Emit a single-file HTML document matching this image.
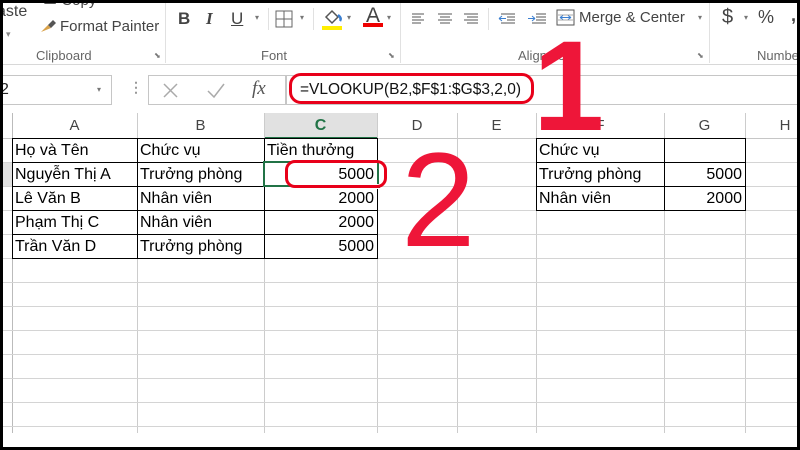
<!DOCTYPE html>
<html><head><meta charset="utf-8"><style>
*{margin:0;padding:0;box-sizing:border-box}
body{width:800px;height:450px;overflow:hidden;background:#000;font-family:"Liberation Sans",Arial,sans-serif;position:relative}
.a{position:absolute}
#page{position:absolute;left:3px;top:3px;width:794px;height:444px;background:#fff;overflow:hidden}
.rb{color:#444;font-size:15px}
.gl{color:#666;font-size:13px}
.vs{position:absolute;width:1px;background:#e1e1e1}
.hl{position:absolute;height:1px;background:#d4d4d4;left:0;width:800px}
.vl{position:absolute;width:1px;background:#d4d4d4;top:136px;height:320px}
.ch{position:absolute;top:110px;height:26px;line-height:26px;text-align:center;font-size:15px;color:#444}
.t{position:absolute;font-size:16px;color:#000;height:24px;line-height:24px;padding-left:3px;white-space:nowrap}
.n{text-align:right;padding-right:3px;padding-left:0}
</style></head><body>
<div id="page">
<div class="a rb" style="left:-6px;top:0;font-size:16px">aste</div>
<div class="a" style="left:3px;top:26px;color:#888;font-size:9px">▾</div>
<div class="a" style="left:40px;top:-12px;font-size:15px;color:#444">▭ Copy</div>
<svg class="a" style="left:36px;top:15px" width="18" height="16"><path d="M2 14 L9 7 L12 10 Z" fill="#d9a24a"/><path d="M9 7 L14 2 L17 5 L12 10Z" fill="#555"/></svg>
<div class="a rb" style="left:57px;top:15px">Format Painter</div>
<div class="a gl" style="left:33px;top:45px">Clipboard</div>
<div class="a" style="left:151px;top:48px;font-size:8px;color:#777">⬊</div>
<div class="vs" style="left:162px;top:0;height:60px"></div>
<div class="a" style="left:175px;top:6px;font-weight:bold;font-size:17px;color:#444">B</div>
<div class="a" style="left:203px;top:6px;font-style:italic;font-size:17px;color:#444;font-family:'Liberation Serif',serif;font-weight:bold">I</div>
<div class="a" style="left:228px;top:6px;font-size:17px;color:#444;text-decoration:underline">U</div>
<div class="a" style="left:252px;top:10px;font-size:8px;color:#777">▾</div>
<div class="vs" style="left:265px;top:5px;height:22px"></div>
<svg class="a" style="left:272px;top:7px" width="18" height="18"><rect x="1" y="1" width="16" height="16" fill="none" stroke="#666"/><path d="M9 1V17M1 9H17" stroke="#666"/></svg>
<div class="a" style="left:297px;top:10px;font-size:8px;color:#777">▾</div>
<div class="vs" style="left:310px;top:5px;height:22px"></div>
<svg class="a" style="left:318px;top:4px" width="24" height="24"><path d="M5 10 L11 4 L17 10 L11 16Z" fill="none" stroke="#555" stroke-width="1.5"/><path d="M17 8 q4 3 2 6" fill="none" stroke="#3b7fd1" stroke-width="2.5"/><rect x="1" y="19" width="20" height="4" fill="#ffee00"/></svg>
<div class="a" style="left:344px;top:10px;font-size:8px;color:#777">▾</div>
<div class="a" style="left:363px;top:1px;font-size:21px;color:#444">A</div>
<div class="a" style="left:360px;top:20px;width:20px;height:4px;background:#e00"></div>
<div class="a" style="left:384px;top:10px;font-size:8px;color:#777">▾</div>
<div class="a gl" style="left:258px;top:45px">Font</div>
<div class="a" style="left:385px;top:48px;font-size:8px;color:#777">⬊</div>
<div class="vs" style="left:397px;top:0;height:60px"></div>
<svg class="a" style="left:405px;top:9px" width="140" height="14" stroke="#555" stroke-width="1"><path d="M4 2H16M4 5H13M4 8H16M4 11H13"/><path d="M30 2H44M32 5H42M30 8H44M32 11H42"/><path d="M56 2H70M59 5H70M56 8H70M59 11H70"/><path d="M93 2H107M99 5H107M99 8H107M93 11H107" /><path d="M91 6.5H98M91 6.5l3-2.5M91 6.5l3 2.5" stroke="#3b7fd1"/><path d="M128 2H138M128 5H138M128 8H138M124 11H138"/><path d="M120 6.5H127M127 6.5l-3-2.5M127 6.5l-3 2.5" stroke="#3b7fd1"/></svg>
<div class="vs" style="left:485px;top:5px;height:22px"></div>
<svg class="a" style="left:553px;top:5px" width="20" height="20"><rect x="1" y="2" width="17" height="15" fill="none" stroke="#555"/><path d="M1 7H18M1 12H18" stroke="#aaa"/><path d="M4 9.5H15M4 9.5l3-2M4 9.5l3 2M15 9.5l-3-2M15 9.5l-3 2" stroke="#3b7fd1"/></svg>
<div class="a rb" style="left:576px;top:6px">Merge &amp; Center</div>
<div class="a" style="left:695px;top:10px;font-size:8px;color:#777">▾</div>
<div class="a gl" style="left:515px;top:45px">Alignment</div>
<div class="a" style="left:694px;top:48px;font-size:8px;color:#777">⬊</div>
<div class="vs" style="left:706px;top:0;height:60px"></div>
<div class="a" style="left:719px;top:3px;font-size:20px;color:#444">$</div>
<div class="a" style="left:741px;top:10px;font-size:8px;color:#777">▾</div>
<div class="a" style="left:755px;top:4px;font-size:18px;color:#444">%</div>
<div class="a" style="left:788px;top:2px;font-size:18px;color:#444;font-weight:bold">,</div>
<div class="a gl" style="left:754px;top:45px">Number</div>
<div class="a" style="left:0;top:61px;width:800px;height:1px;background:#d8d8d8"></div>
<div class="a" style="left:0;top:62px;width:800px;height:48px;background:#fff"></div>
<div class="a" style="left:-3px;top:72px;width:112px;height:30px;border:1px solid #c6c6c6;background:#fff"></div>
<div class="a" style="left:-3px;top:78px;font-size:16px;color:#222">2</div>
<div class="a" style="left:94px;top:82px;font-size:8px;color:#777">▾</div>
<div class="a" style="left:126px;top:76px;font-size:14px;color:#999;font-weight:bold">⋮</div>
<div class="a" style="left:145px;top:72px;width:138px;height:30px;border:1px solid #c6c6c6;background:#fff"></div>
<svg class="a" style="left:158px;top:79px" width="80" height="18"><path d="M3 2L16 15M16 2L3 15" stroke="#aaa" stroke-width="1.5"/><path d="M47 9L53 15L63 2" stroke="#aaa" stroke-width="1.5" fill="none"/></svg>
<div class="a" style="left:249px;top:75px;font-size:19px;color:#555;font-style:italic;font-family:'Liberation Serif',serif">fx</div>
<div class="a" style="left:283px;top:72px;width:520px;height:30px;border:1px solid #c6c6c6;background:#fff"></div>
<div class="a" style="left:286px;top:70px;width:245px;height:31px;border:3px solid #e8001a;border-radius:12px"></div>
<div class="a" style="left:297px;top:78px;font-size:15.5px;color:#111">=VLOOKUP(B2,$F$1:$G$3,2,0)</div>
<div class="a" style="left:0;top:110px;width:800px;height:26px;background:#fff"></div>
<div class="a" style="left:261px;top:110px;width:113px;height:26px;background:#e1e1e1;border-bottom:2px solid #217346"></div>
<div class="a" style="left:0;top:135px;width:800px;height:1px;background:#c6c6c6"></div>
<div class="vl" style="left:9px;top:110px;background:#bbb"></div>
<div class="vl" style="left:134px;top:110px;background:#ccc"></div>
<div class="vl" style="left:261px;top:110px;background:#ccc"></div>
<div class="vl" style="left:374px;top:110px;background:#ccc"></div>
<div class="vl" style="left:454px;top:110px;background:#ccc"></div>
<div class="vl" style="left:533px;top:110px;background:#ccc"></div>
<div class="vl" style="left:661px;top:110px;background:#ccc"></div>
<div class="vl" style="left:742px;top:110px;background:#ccc"></div>
<div class="ch" style="left:9px;width:125px">A</div>
<div class="ch" style="left:134px;width:127px">B</div>
<div class="ch" style="left:261px;width:113px;color:#217346;font-weight:bold;font-size:16px">C</div>
<div class="ch" style="left:374px;width:80px">D</div>
<div class="ch" style="left:454px;width:79px">E</div>
<div class="ch" style="left:533px;width:128px">F</div>
<div class="ch" style="left:661px;width:81px">G</div>
<div class="ch" style="left:742px;width:80px">H</div>
<div class="hl" style="top:159px"></div><div class="hl" style="top:183px"></div><div class="hl" style="top:207px"></div><div class="hl" style="top:231px"></div><div class="hl" style="top:255px"></div><div class="hl" style="top:279px"></div><div class="hl" style="top:303px"></div><div class="hl" style="top:327px"></div><div class="hl" style="top:351px"></div><div class="hl" style="top:375px"></div><div class="hl" style="top:399px"></div><div class="hl" style="top:423px"></div>
<div class="a" style="left:0;top:160px;width:9px;height:23px;background:#e1e1e1"></div>
<div class="a" style="left:9px;top:135px;width:366px;height:121px;border:1px solid #000"></div>
<div class="a" style="left:134px;top:135px;width:1px;height:121px;background:#000"></div>
<div class="a" style="left:261px;top:135px;width:1px;height:121px;background:#000"></div>
<div class="a" style="left:9px;top:159px;width:366px;height:1px;background:#000"></div>
<div class="a" style="left:9px;top:183px;width:366px;height:1px;background:#000"></div>
<div class="a" style="left:9px;top:207px;width:366px;height:1px;background:#000"></div>
<div class="a" style="left:9px;top:231px;width:366px;height:1px;background:#000"></div>
<div class="a" style="left:260px;top:158px;width:116px;height:26px;border:2px solid #217346"></div>
<div class="a" style="left:373px;top:181px;width:5px;height:5px;background:#217346;border:1px solid #fff"></div>
<div class="t" style="left:9px;top:136px">Họ và Tên</div>
<div class="t" style="left:134px;top:136px">Chức vụ</div>
<div class="t" style="left:261px;top:136px">Tiền thưởng</div>
<div class="t" style="left:9px;top:160px">Nguyễn Thị A</div>
<div class="t" style="left:134px;top:160px">Trưởng phòng</div>
<div class="t n" style="left:261px;top:160px;width:113px">5000</div>
<div class="t" style="left:9px;top:184px">Lê Văn B</div>
<div class="t" style="left:134px;top:184px">Nhân viên</div>
<div class="t n" style="left:261px;top:184px;width:113px">2000</div>
<div class="t" style="left:9px;top:208px">Phạm Thị C</div>
<div class="t" style="left:134px;top:208px">Nhân viên</div>
<div class="t n" style="left:261px;top:208px;width:113px">2000</div>
<div class="t" style="left:9px;top:232px">Trần Văn D</div>
<div class="t" style="left:134px;top:232px">Trưởng phòng</div>
<div class="t n" style="left:261px;top:232px;width:113px">5000</div>
<div class="a" style="left:533px;top:135px;width:210px;height:73px;border:1px solid #000"></div>
<div class="a" style="left:661px;top:135px;width:1px;height:73px;background:#000"></div>
<div class="a" style="left:533px;top:159px;width:210px;height:1px;background:#000"></div>
<div class="a" style="left:533px;top:183px;width:210px;height:1px;background:#000"></div>
<div class="t" style="left:533px;top:136px">Chức vụ</div>
<div class="t" style="left:533px;top:160px">Trưởng phòng</div>
<div class="t n" style="left:661px;top:160px;width:81px">5000</div>
<div class="t" style="left:533px;top:184px">Nhân viên</div>
<div class="t n" style="left:661px;top:184px;width:81px">2000</div>
<div class="a" style="left:282px;top:157px;width:102px;height:28px;border:3px solid #e8001a;border-radius:10px"></div>
<div class="a" style="left:530px;top:20px;font-size:128px;line-height:128px;color:#ee1639;font-weight:bold">1</div>
<div class="a" style="left:398px;top:131px;font-size:134px;line-height:134px;color:#ee1639">2</div>
</div>
</body></html>
